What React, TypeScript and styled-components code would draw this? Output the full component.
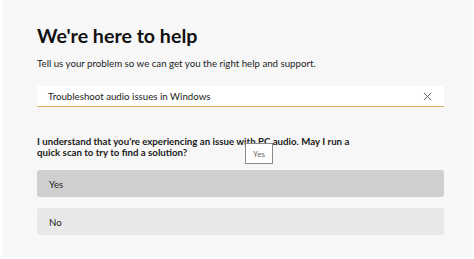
import React from 'react';
import styled, { createGlobalStyle } from 'styled-components';

const Global = createGlobalStyle`
    html, body {
        margin: 0;
        padding: 0;
        background: #ffffff;
    }
    body {
        font-family: Lato, "Open Sans", sans-serif;
        color: #1b1b1b;
    }
`;

const Side = styled.div`
    width: 474px;
    height: 259px;
    padding: 0 2px 2px 2px;
    box-sizing: border-box;
`;
const Panel = styled.div`
    position: relative;
    height: 100%;
    background: #f7f7f7;
    padding: 22px 28px 0 35px;
    box-sizing: border-box;
`;
const Tittel = styled.h1`
    margin: 0;
    font-size: 19.6px;
    font-weight: 700;
    line-height: 28px;
    color: #111;
`;
const Undertekst = styled.p`
    margin: 6px 0 0 0;
    font-size: 9.7px;
    line-height: 14px;
    color: #222;
`;
const Sokefelt = styled.div`
    margin-top: 16px;
    height: 20px;
    display: flex;
    align-items: center;
    background: #ffffff;
    border-bottom: 1.5px solid #dcb25e;
    border-radius: 2px 2px 0 0;
    padding: 0 12px 0 11px;
`;
const Sokeord = styled.span`
    flex: 1;
    font-size: 9.7px;
    color: #222;
`;
const Lukk = styled.svg`
    width: 9px;
    height: 9px;
`;
const Sporsmal = styled.p`
    margin: 29px 0 0 0;
    width: 322px;
    font-size: 9.7px;
    font-weight: 700;
    line-height: 11px;
    color: #1b1b1b;
`;
const Svar = styled.div<{ $valgt?: boolean }>`
    height: 27px;
    display: flex;
    align-items: center;
    padding: 0 12px;
    margin-top: ${p => (p.$valgt ? '12px' : '11px')};
    background: ${p => (p.$valgt ? '#cfcfcf' : '#e8e8e8')};
    border-radius: 3px;
    font-size: 9.7px;
    color: #222;
`;
const Hint = styled.div`
    position: absolute;
    left: 243px;
    top: 143px;
    width: 28px;
    height: 21px;
    box-sizing: border-box;
    background: #ffffff;
    border: 1px solid #8a8a8a;
    display: flex;
    align-items: center;
    justify-content: center;
    font-size: 8px;
    color: #666;
`;

export default function App() {
    return (
        <Side>
            <Global />
            <Panel>
                <Tittel>We're here to help</Tittel>
                <Undertekst>Tell us your problem so we can get you the right help and support.</Undertekst>
                <Sokefelt>
                    <Sokeord>Troubleshoot audio issues in Windows</Sokeord>
                    <Lukk viewBox="0 0 10 10">
                        <path d="M1 1 L9 9 M9 1 L1 9" stroke="#555" strokeWidth="1" fill="none" />
                    </Lukk>
                </Sokefelt>
                <Sporsmal>
                    I understand that you're experiencing an issue with PC audio. May I run a quick scan to try to find a solution?
                </Sporsmal>
                <Svar $valgt>Yes</Svar>
                <Svar>No</Svar>
                <Hint>Yes</Hint>
            </Panel>
        </Side>
    );
}
